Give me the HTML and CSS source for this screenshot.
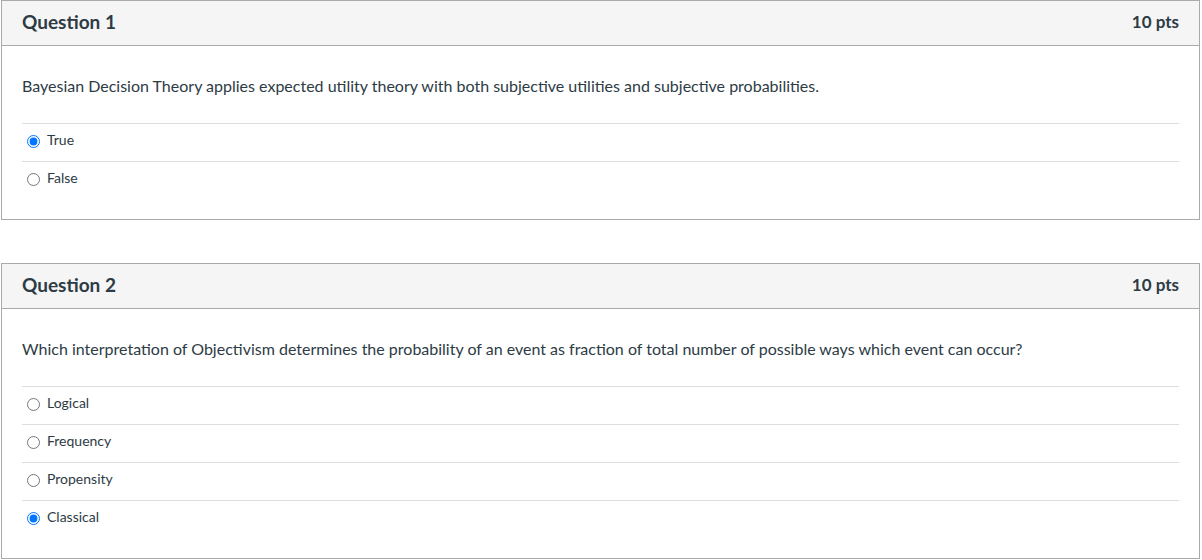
FILE: index.html
```html
<!DOCTYPE html>
<html lang="en">
<head>
  <meta charset="UTF-8" />
  <title>Quiz</title>
  <link rel="stylesheet" href="styles.css">
</head>
<body>
  <div class="quiz">
    <!-- Question 1 -->
    <div class="question">
      <div class="question-header">
        <span class="question-name">Question 1</span>
        <span class="question-points">10 pts</span>
      </div>
      <div class="question-body">
        <div class="question-text">Bayesian Decision Theory applies expected utility theory with both subjective utilities and subjective probabilities.</div>
        <div class="answers">
          <label class="answer"><input type="radio" name="q1" checked> True</label>
          <label class="answer"><input type="radio" name="q1"> False</label>
        </div>
      </div>
    </div>

    <!-- Question 2 -->
    <div class="question">
      <div class="question-header">
        <span class="question-name">Question 2</span>
        <span class="question-points">10 pts</span>
      </div>
      <div class="question-body">
        <div class="question-text">Which interpretation of Objectivism determines the probability of an event as fraction of total number of possible ways which event can occur?</div>
        <div class="answers">
          <label class="answer"><input type="radio" name="q2"> Logical</label>
          <label class="answer"><input type="radio" name="q2"> Frequency</label>
          <label class="answer"><input type="radio" name="q2"> Propensity</label>
          <label class="answer"><input type="radio" name="q2" checked> Classical</label>
        </div>
      </div>
    </div>
  </div>
</body>
</html>
```
FILE: styles.css
```css
body { margin: 0; font-family: Lato, "Liberation Sans", sans-serif; color: #2d3b45; }
.quiz { width: 1199px; margin-left: 1px; }
.question { border: 1px solid #aaaaaa; margin-bottom: 43px; }
.question:last-child { margin-bottom: 0; }
.question-header { display: flex; justify-content: space-between; align-items: center; box-sizing: border-box; height: 45px; padding: 0 20px 4px; background: #f5f5f5; border-bottom: 1px solid #aaaaaa; }
.question-name { font-size: 19px; font-weight: bold; }
.question-points { font-size: 17px; font-weight: bold; }
.question-body { padding: 28px 20px 20px; }
.question-text { font-size: 16px; line-height: 24px; margin-bottom: 25px; }
.answer { display: flex; align-items: center; box-sizing: border-box; height: 38px; padding-bottom: 7px; border-top: 1px solid #dddddd; font-size: 14px; }
.answer input { margin: 4px 7px 0 5px; width: 13px; height: 13px; }
```
